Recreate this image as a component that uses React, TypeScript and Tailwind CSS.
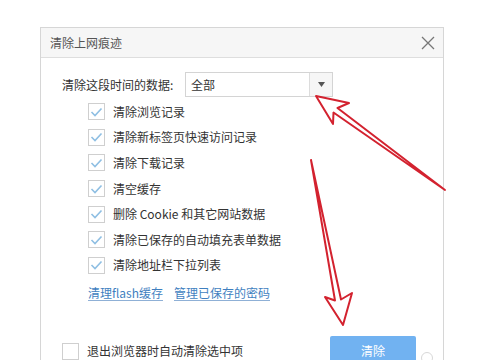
import React from "react";

const options = [
  "清除浏览记录",
  "清除新标签页快速访问记录",
  "清除下载记录",
  "清空缓存",
  "删除 Cookie 和其它网站数据",
  "清除已保存的自动填充表单数据",
  "清除地址栏下拉列表",
];

function CheckBox({ checked }: { checked: boolean }) {
  return (
    <span className="flex h-[17px] w-[17px] shrink-0 items-center justify-center border border-[#cfcfcf] bg-white">
      {checked ? (
        <svg width="13" height="10" viewBox="0 0 13 10">
          <polyline
            points="1.5,5 5,8.5 11.5,1.5"
            fill="none"
            stroke="#8fbfe3"
            strokeWidth="1.6"
          />
        </svg>
      ) : null}
    </span>
  );
}

function Arrows() {
  return (
    <svg
      className="pointer-events-none absolute left-0 top-0"
      width="500"
      height="360"
      viewBox="0 0 500 360"
    >
      <polygon
        points="316,96 349,103 337.5,108 445,190 333.5,112.5 333,124"
        fill="none"
        stroke="#d3222f"
        strokeWidth="2"
        strokeLinejoin="round"
      />
      <polygon
        points="343,325 352,293 341,299.5 311,160 335,300.5 325,297"
        fill="none"
        stroke="#d3222f"
        strokeWidth="2"
        strokeLinejoin="round"
      />
    </svg>
  );
}

export default function App() {
  return (
    <div className="relative h-[360px] w-[500px] overflow-hidden bg-white pl-[40px] pt-[27px] font-['Noto_Sans_CJK_SC','Noto_Sans',sans-serif] text-[12px] text-[#333]">
      <section className="h-[360px] w-[404px] border border-[#d6d6d6] bg-white">
        <header className="flex h-[30px] items-center justify-between border-b border-[#dedede] bg-[#f6f6f6] pl-[9px] pr-[8px]">
          <span className="text-[12px] text-[#555]">清除上网痕迹</span>
          <svg width="14" height="14" viewBox="0 0 14 14">
            <path d="M1 1 L13 13 M13 1 L1 13" stroke="#777" strokeWidth="1.3" />
          </svg>
        </header>

        <div className="pl-[21px] pr-[27px] pt-[14px]">
          <div className="flex items-center">
            <span className="w-[123px]">清除这段时间的数据:</span>
            <div className="flex h-[25px] w-[148px] items-stretch border border-[#d4d4d4]">
              <span className="flex flex-1 items-center pl-[5px]">全部</span>
              <span className="flex w-[23px] items-center justify-center border-l border-[#dcdcdc] bg-[#f6f6f6]">
                <svg width="7" height="5" viewBox="0 0 7 5">
                  <polygon points="0,0 7,0 3.5,5" fill="#555" />
                </svg>
              </span>
            </div>
          </div>

          <ul className="ml-[26px] mt-[2px]">
            {options.map((label) => (
              <li key={label} className="flex h-[25.6px] items-center gap-[8px]">
                <CheckBox checked />
                <span>{label}</span>
              </li>
            ))}
          </ul>

          <div className="ml-[26px] mt-[5px] flex h-[20px] items-center gap-[11px] text-[#3f7fbf]">
            <a className="underline decoration-[#8fb0d6] underline-offset-2">清理flash缓存</a>
            <a className="underline decoration-[#8fb0d6] underline-offset-2">管理已保存的密码</a>
          </div>

          <div className="mt-[33px] flex items-start justify-between">
            <div className="mt-[6px] flex items-center gap-[8px]">
              <CheckBox checked={false} />
              <span>退出浏览器时自动清除选中项</span>
            </div>
            <button
              type="button"
              className="h-[30px] w-[86px] rounded-[2px] bg-[#71b2f1] text-[12px] text-white"
            >
              清除
            </button>
          </div>
        </div>
      </section>

      <span className="absolute left-[421px] top-[352px] h-[12px] w-[12px] rounded-full border border-[#d8d8d8]" />
      <Arrows />
    </div>
  );
}
